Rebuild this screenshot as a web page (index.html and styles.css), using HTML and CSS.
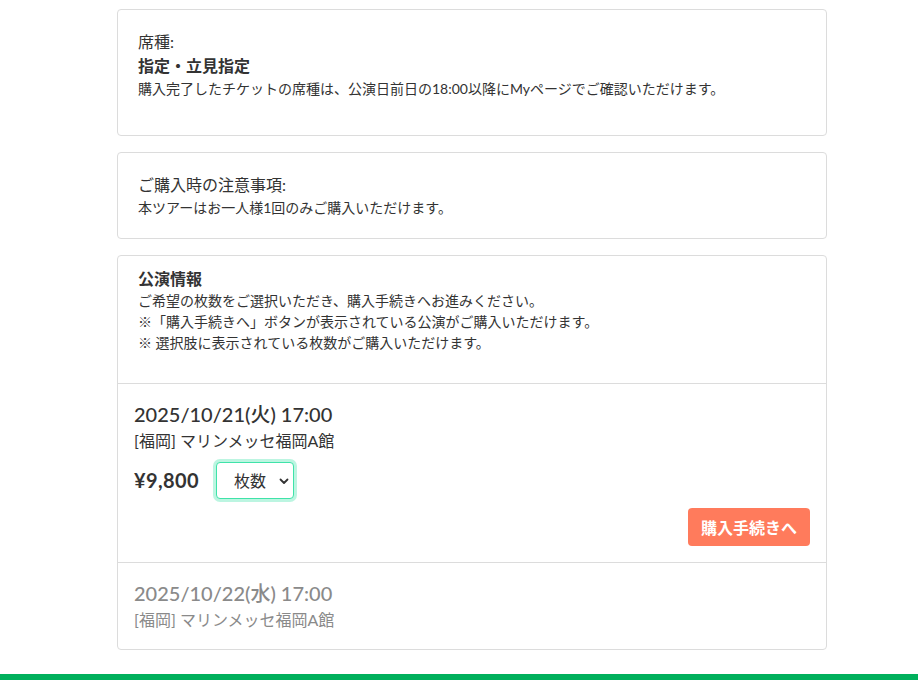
FILE: index.html
```html
<!DOCTYPE html>
<html lang="ja">
<head>
<meta charset="utf-8">
<link rel="stylesheet" href="styles.css">
</head>
<body>
<main class="wrap">
  <section class="card card-pad">
    <p class="label">席種:</p>
    <p class="label strong">指定・立見指定</p>
    <p class="small last">購入完了したチケットの席種は、公演日前日の18:00以降にMyページでご確認いただけます。</p>
  </section>

  <section class="card card-pad">
    <p class="label">ご購入時の注意事項:</p>
    <p class="small">本ツアーはお一人様1回のみご購入いただけます。</p>
  </section>

  <section class="card">
    <div class="info">
      <p class="label strong">公演情報</p>
      <p class="small">ご希望の枚数をご選択いただき、購入手続きへお進みください。</p>
      <p class="small">※「購入手続きへ」ボタンが表示されている公演がご購入いただけます。</p>
      <p class="small">※ 選択肢に表示されている枚数がご購入いただけます。</p>
    </div>
    <div class="show">
      <p class="date">2025/10/21(火) 17:00</p>
      <p class="venue">[福岡] マリンメッセ福岡A館</p>
      <div class="price-row">
        <span class="price">¥9,800</span>
        <div class="select-wrap">
          <select class="qty"><option>枚数</option><option>1</option><option>2</option></select>
          <svg class="chev" width="10" height="8" viewBox="0 0 10 8"><path d="M1.5 2.5 L5 6 L8.5 2.5" fill="none" stroke="#333" stroke-width="1.8" stroke-linecap="round" stroke-linejoin="round"/></svg>
        </div>
      </div>
      <div class="btn-row"><button class="buy">購入手続きへ</button></div>
    </div>
    <div class="show disabled">
      <p class="date">2025/10/22(水) 17:00</p>
      <p class="venue">[福岡] マリンメッセ福岡A館</p>
    </div>
  </section>
</main>
<footer class="footer"></footer>
</body>
</html>
```

FILE: styles.css
```css
* { box-sizing: border-box; }
html, body { margin: 0; padding: 0; background: #fff; }
body {
  font-family: "Lato", "Noto Sans CJK JP", sans-serif;
  color: #333;
  overflow: hidden;
  height: 680px;
}
p { margin: 0; }
.wrap {
  width: 710px;
  margin-left: 117px;
  padding-top: 9px;
  display: flex;
  flex-direction: column;
  gap: 16px;
}
.card {
  border: 1px solid #dcdcdc;
  border-radius: 4px;
  background: #fff;
}
.card-pad { padding: 20px; }
.label { font-size: 16px; line-height: 24px; }
.strong { font-weight: 700; }
.small { font-size: 14px; line-height: 21px; }
.last { margin-bottom: 16px; }
.info {
  padding: 12px 20px 30px;
  border-bottom: 1px solid #dcdcdc;
}
.info .label { line-height: 22px; margin-bottom: 0; }
.show {
  padding: 15px 16px 16px;
}
.show + .show { border-top: 1px solid #dcdcdc; padding-bottom: 17px; }
.date { font-size: 20px; line-height: 30px; font-weight: 500; }
.venue { font-size: 16px; line-height: 24px; }
.price-row {
  display: flex;
  align-items: center;
  gap: 17px;
  margin-top: 9px;
}
.price { font-size: 20px; font-weight: 700; line-height: 37px; letter-spacing: 0.4px; }
.select-wrap { position: relative; width: 78px; height: 37px; }
.qty {
  appearance: none;
  -webkit-appearance: none;
  width: 78px;
  height: 37px;
  border: 1.5px solid #3fe3a9;
  border-radius: 4px;
  box-shadow: 0 0 0 3px rgba(64, 227, 169, 0.35);
  background: #fff;
  font-family: "Lato", "Noto Sans CJK JP", sans-serif;
  font-size: 16px;
  color: #333;
  padding: 0 0 0 17px;
  outline: none;
}
.chev { position: absolute; right: 5px; top: 15px; }
.btn-row { display: flex; justify-content: flex-end; margin-top: 9px; }
.buy {
  background: #ff7b5c;
  color: #fff;
  border: none;
  border-radius: 4px;
  height: 38px;
  width: 122px;
  font-family: "Lato", "Noto Sans CJK JP", sans-serif;
  font-size: 16px;
  font-weight: 700;
  padding: 0;
}
.disabled { color: #8a8a8a; }
.footer {
  margin-top: 24px;
  height: 40px;
  background: #00b05c;
}
```
